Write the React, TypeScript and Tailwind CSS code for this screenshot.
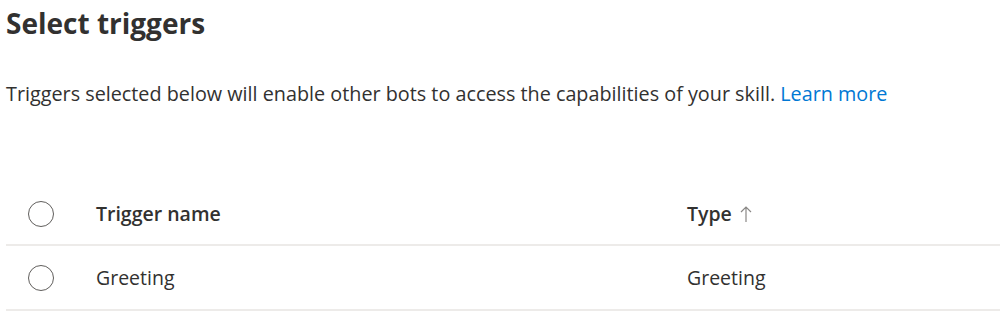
export default function App() {
  const font = { fontFamily: '"Segoe UI", "Open Sans", sans-serif' };
  return (
    <div className="w-[1000px] h-[336px] bg-white text-[#323130] pl-[6px]" style={font}>
      <h1 className="text-[28px] font-bold leading-[44px] pt-[1px]">Select triggers</h1>
      <p className="mt-[35px] text-[19.8px] leading-[28px] text-[#323130]">
        Triggers selected below will enable other bots to access the capabilities of your skill.{' '}
        <a className="text-[#0078d4]">Learn more</a>
      </p>
      <div className="mt-[75px]">
        <div className="flex items-center h-[63px] border-b-2 border-[#edebe9]">
          <div className="w-[90px] flex items-center pl-[22px]">
            <span className="w-[26px] h-[26px] rounded-full border-[1.5px] border-[#605e5c]" />
          </div>
          <div className="w-[591px] text-[19.5px] font-semibold">Trigger name</div>
          <div className="flex items-center gap-[8px] text-[19.5px] font-semibold">
            Type
            <svg width="12" height="18" viewBox="0 0 12 18" fill="none" stroke="#8a8886" strokeWidth="1.2">
              <path d="M6 17V2M1 7l5-5 5 5" />
            </svg>
          </div>
        </div>
        <div className="flex items-center h-[65px] border-b-2 border-[#edebe9]">
          <div className="w-[90px] flex items-center pl-[22px]">
            <span className="w-[26px] h-[26px] rounded-full border-[1.5px] border-[#605e5c]" />
          </div>
          <div className="w-[591px] text-[19.5px]">Greeting</div>
          <div className="text-[19.5px]">Greeting</div>
        </div>
      </div>
    </div>
  );
}
